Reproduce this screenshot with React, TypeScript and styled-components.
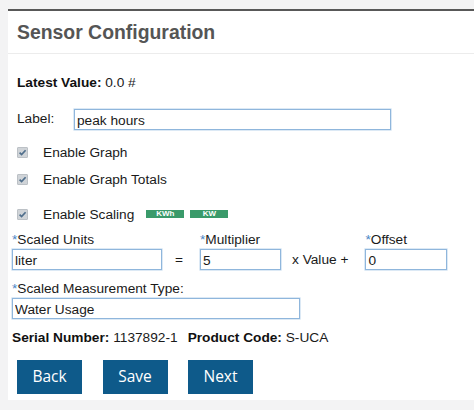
import React from "react";
import styled, { createGlobalStyle } from "styled-components";

const Global = createGlobalStyle`
  html, body { margin: 0; padding: 0; }
  body {
    background: #f3f3f4;
    font-family: "Liberation Sans", Arial, sans-serif;
    overflow: hidden;
    width: 474px;
    height: 410px;
  }
`;

const Card = styled.div`
  margin: 9px 0 0 8px;
  width: 480px;
  height: 391px;
  box-sizing: border-box;
  background: #ffffff;
  border-top: 2px solid #585858;
  display: flex;
  flex-direction: column;
`;

const Header = styled.div`
  height: 42px;
  line-height: 42px;
  padding-left: 9px;
  border-bottom: 1px solid #ececec;
  font-size: 19.4px;
  font-weight: bold;
  color: #555555;
`;

const Body = styled.div`
  padding: 20px 0 0 4px;
  display: flex;
  flex-direction: column;
  font-size: 13.7px;
  color: #1a1a1a;
`;

const Indented = styled.div`
  padding-left: 5px;
  display: flex;
  flex-direction: column;
`;

const Line = styled.div<{ $mt?: number }>`
  line-height: 18px;
  margin-top: ${(p) => p.$mt ?? 0}px;
  white-space: nowrap;
`;

const Strong = styled.b`
  font-weight: bold;
  color: #111;
`;

const LabelRow = styled.div`
  display: flex;
  align-items: center;
  margin-top: 17px;
`;

const LabelText = styled.span`
  width: 57px;
  margin-top: -3px;
`;

const TextInput = styled.input<{ $w: number }>`
  box-sizing: border-box;
  width: ${(p) => p.$w}px;
  height: 21px;
  border: 1px solid #8fb6dc;
  box-shadow: 0 0 0 0.6px #c5dbef;
  padding: 1px 2px 0;
  font-family: "Liberation Sans", Arial, sans-serif;
  font-size: 13.7px;
  color: #1a1a1a;
  background: #fff;
  outline: none;
  margin: 0;
`;

const CheckRow = styled.div<{ $mt: number }>`
  display: flex;
  align-items: center;
  height: 18px;
  margin-top: ${(p) => p.$mt}px;
`;

const CheckBox = styled.span`
  box-sizing: border-box;
  width: 11px;
  height: 11px;
  background: #d0d4d8;
  border: 1px solid #bcc1c6;
  border-radius: 1px;
  display: flex;
  align-items: center;
  justify-content: center;
  margin-right: 15px;
`;

const Badge = styled.span<{ $ml: number }>`
  display: inline-flex;
  align-items: center;
  justify-content: center;
  width: 38px;
  height: 8px;
  background: #3a9a6a;
  color: #fff;
  font-size: 8px;
  font-weight: bold;
  line-height: 8px;
  margin-left: ${(p) => p.$ml}px;
`;

const ScaleRow = styled.div`
  display: flex;
  align-items: flex-end;
  margin-top: 9px;
`;

const Field = styled.div`
  display: flex;
  flex-direction: column;
`;

const FieldLabel = styled.label`
  line-height: 16px;
  margin-bottom: 1px;
  white-space: nowrap;
`;

const Req = styled.span`
  color: #4a86c5;
`;

const Operator = styled.span<{ $l: number; $r: number }>`
  height: 21px;
  line-height: 21px;
  margin: 0 ${(p) => p.$r}px 0 ${(p) => p.$l}px;
  white-space: nowrap;
`;

const MeasureField = styled(Field)`
  margin-top: 11px;
`;

const InfoLine = styled.div`
  line-height: 18px;
  margin-top: 10px;
  white-space: nowrap;
`;

const InfoPair = styled.span`
  margin-right: 10px;
`;

const Buttons = styled.div`
  display: flex;
  gap: 20.5px;
  margin-top: 13px;
  padding-left: 5px;
`;

const Button = styled.button`
  width: 65px;
  height: 34px;
  border: none;
  background: #0e5a8a;
  color: #ffffff;
  font-family: "Open Sans", sans-serif;
  font-size: 15.5px;
  padding: 0 0 2px;
  cursor: pointer;
`;

const Check = () => (
  <CheckBox>
    <svg width="9" height="9" viewBox="0 0 9 9">
      <path d="M1.6 4.6 L3.6 6.6 L7.6 2.2" fill="none" stroke="#4f6e8c" strokeWidth="1.7" />
    </svg>
  </CheckBox>
);

export default function App() {
  return (
    <>
      <Global />
      <Card>
        <Header>Sensor Configuration</Header>
        <Body>
          <Indented>
            <Line>
              <Strong>Latest Value:</Strong> 0.0 #
            </Line>
            <LabelRow>
              <LabelText>Label:</LabelText>
              <TextInput $w={317} defaultValue="peak hours" />
            </LabelRow>
            <CheckRow $mt={13}>
              <Check />
              Enable Graph
            </CheckRow>
            <CheckRow $mt={9}>
              <Check />
              Enable Graph Totals
            </CheckRow>
            <CheckRow $mt={17}>
              <Check />
              Enable Scaling
              <Badge $ml={12}>KWh</Badge>
              <Badge $ml={6}>KW</Badge>
            </CheckRow>
          </Indented>
          <ScaleRow>
            <Field>
              <FieldLabel>
                <Req>*</Req>Scaled Units
              </FieldLabel>
              <TextInput $w={150} defaultValue="liter" />
            </Field>
            <Operator $l={13} $r={17}>=</Operator>
            <Field>
              <FieldLabel>
                <Req>*</Req>Multiplier
              </FieldLabel>
              <TextInput $w={81} defaultValue="5" />
            </Field>
            <Operator $l={11} $r={17}>x Value +</Operator>
            <Field>
              <FieldLabel>
                <Req>*</Req>Offset
              </FieldLabel>
              <TextInput $w={82} defaultValue="0" />
            </Field>
          </ScaleRow>
          <MeasureField>
            <FieldLabel>
              <Req>*</Req>Scaled Measurement Type:
            </FieldLabel>
            <TextInput $w={288} defaultValue="Water Usage" />
          </MeasureField>
          <InfoLine>
            <InfoPair>
              <Strong>Serial Number:</Strong> 1137892-1
            </InfoPair>
            <InfoPair>
              <Strong>Product Code:</Strong> S-UCA
            </InfoPair>
          </InfoLine>
          <Buttons>
            <Button>Back</Button>
            <Button>Save</Button>
            <Button>Next</Button>
          </Buttons>
        </Body>
      </Card>
    </>
  );
}
